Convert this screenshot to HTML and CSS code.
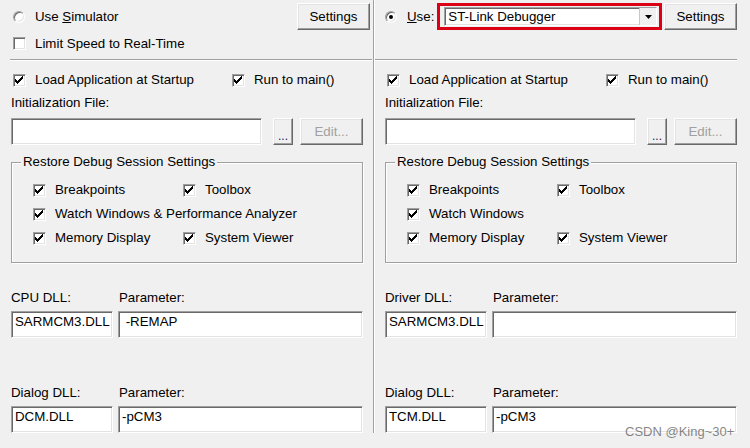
FILE: index.html
```html
<!DOCTYPE html>
<html lang="en">
<head>
    <meta charset="UTF-8">
    <title>Options for Target - Debug</title>
    <link rel="stylesheet" href="styles.css">
</head>
<body>
    <div class="dialog">
        <!-- Simulator side -->
        <div class="panel panel-left">
            <div class="top top-left">
                <div class="row">
                    <label class="opt"><span class="radio"></span><span>Use <u>S</u>imulator</span></label>
                    <button class="btn btn-settings">Settings</button>
                </div>
                <div class="row">
                    <label class="opt"><span class="box"></span><span>Limit Speed to Real-Time</span></label>
                </div>
            </div>
            <div class="sep sep-left"></div>
            <div class="opts">
                <label class="opt"><span class="box"><svg class="tick" viewBox="1 1 11 11"><path d="M2 5h1v3H2zM3 6h1v3H3zM4 7h1v3H4zM5 6h1v3H5zM6 5h1v3H6zM7 4h1v3H7zM8 3h1v3H8zM9 2h1v3H9z"/></svg></span><span>Load Application at Startup</span></label>
                <label class="opt"><span class="box"><svg class="tick" viewBox="1 1 11 11"><path d="M2 5h1v3H2zM3 6h1v3H3zM4 7h1v3H4zM5 6h1v3H5zM6 5h1v3H6zM7 4h1v3H7zM8 3h1v3H8zM9 2h1v3H9z"/></svg></span><span>Run to main()</span></label>
            </div>
            <div class="init-label">Initialization File:</div>
            <div class="file-row">
                <input class="field file-input" type="text">
                <button class="btn btn-dots">...</button>
                <button class="btn btn-edit" disabled>Edit...</button>
            </div>
            <fieldset class="group">
                <legend>Restore Debug Session Settings</legend>
                <div class="group-grid">
                    <label class="opt"><span class="box"><svg class="tick" viewBox="1 1 11 11"><path d="M2 5h1v3H2zM3 6h1v3H3zM4 7h1v3H4zM5 6h1v3H5zM6 5h1v3H6zM7 4h1v3H7zM8 3h1v3H8zM9 2h1v3H9z"/></svg></span><span>Breakpoints</span></label>
                    <label class="opt"><span class="box"><svg class="tick" viewBox="1 1 11 11"><path d="M2 5h1v3H2zM3 6h1v3H3zM4 7h1v3H4zM5 6h1v3H5zM6 5h1v3H6zM7 4h1v3H7zM8 3h1v3H8zM9 2h1v3H9z"/></svg></span><span>Toolbox</span></label>
                    <label class="opt wide"><span class="box"><svg class="tick" viewBox="1 1 11 11"><path d="M2 5h1v3H2zM3 6h1v3H3zM4 7h1v3H4zM5 6h1v3H5zM6 5h1v3H6zM7 4h1v3H7zM8 3h1v3H8zM9 2h1v3H9z"/></svg></span><span>Watch Windows &amp; Performance Analyzer</span></label>
                    <label class="opt"><span class="box"><svg class="tick" viewBox="1 1 11 11"><path d="M2 5h1v3H2zM3 6h1v3H3zM4 7h1v3H4zM5 6h1v3H5zM6 5h1v3H6zM7 4h1v3H7zM8 3h1v3H8zM9 2h1v3H9z"/></svg></span><span>Memory Display</span></label>
                    <label class="opt"><span class="box"><svg class="tick" viewBox="1 1 11 11"><path d="M2 5h1v3H2zM3 6h1v3H3zM4 7h1v3H4zM5 6h1v3H5zM6 5h1v3H6zM7 4h1v3H7zM8 3h1v3H8zM9 2h1v3H9z"/></svg></span><span>System Viewer</span></label>
                </div>
            </fieldset>
            <div class="dll dll-first">
                <span class="dll-label">CPU DLL:</span>
                <span class="dll-label param">Parameter:</span>
                <input class="field" type="text" value="SARMCM3.DLL">
                <input class="field" type="text" value=" -REMAP">
            </div>
            <div class="dll dll-second">
                <span class="dll-label">Dialog DLL:</span>
                <span class="dll-label param">Parameter:</span>
                <input class="field" type="text" value="DCM.DLL">
                <input class="field" type="text" value="-pCM3">
            </div>
        </div>

        <!-- Hardware debugger side -->
        <div class="panel panel-right">
            <div class="top">
                <div class="row row-use">
                    <label class="opt"><span class="radio on"></span><span><u>U</u>se:</span></label>
                    <div class="frame">
                        <div class="combo">
                            <span class="combo-text">ST-Link Debugger</span>
                            <span class="drop"><svg class="arrow" viewBox="0 0 7 4"><path d="M0 0h7L3.5 4z"/></svg></span>
                        </div>
                    </div>
                    <button class="btn btn-settings">Settings</button>
                </div>
            </div>
            <div class="sep sep-right"></div>
            <div class="opts">
                <label class="opt"><span class="box"><svg class="tick" viewBox="1 1 11 11"><path d="M2 5h1v3H2zM3 6h1v3H3zM4 7h1v3H4zM5 6h1v3H5zM6 5h1v3H6zM7 4h1v3H7zM8 3h1v3H8zM9 2h1v3H9z"/></svg></span><span>Load Application at Startup</span></label>
                <label class="opt"><span class="box"><svg class="tick" viewBox="1 1 11 11"><path d="M2 5h1v3H2zM3 6h1v3H3zM4 7h1v3H4zM5 6h1v3H5zM6 5h1v3H6zM7 4h1v3H7zM8 3h1v3H8zM9 2h1v3H9z"/></svg></span><span>Run to main()</span></label>
            </div>
            <div class="init-label">Initialization File:</div>
            <div class="file-row">
                <input class="field file-input" type="text">
                <button class="btn btn-dots">...</button>
                <button class="btn btn-edit" disabled>Edit...</button>
            </div>
            <fieldset class="group">
                <legend>Restore Debug Session Settings</legend>
                <div class="group-grid">
                    <label class="opt"><span class="box"><svg class="tick" viewBox="1 1 11 11"><path d="M2 5h1v3H2zM3 6h1v3H3zM4 7h1v3H4zM5 6h1v3H5zM6 5h1v3H6zM7 4h1v3H7zM8 3h1v3H8zM9 2h1v3H9z"/></svg></span><span>Breakpoints</span></label>
                    <label class="opt"><span class="box"><svg class="tick" viewBox="1 1 11 11"><path d="M2 5h1v3H2zM3 6h1v3H3zM4 7h1v3H4zM5 6h1v3H5zM6 5h1v3H6zM7 4h1v3H7zM8 3h1v3H8zM9 2h1v3H9z"/></svg></span><span>Toolbox</span></label>
                    <label class="opt wide"><span class="box"><svg class="tick" viewBox="1 1 11 11"><path d="M2 5h1v3H2zM3 6h1v3H3zM4 7h1v3H4zM5 6h1v3H5zM6 5h1v3H6zM7 4h1v3H7zM8 3h1v3H8zM9 2h1v3H9z"/></svg></span><span>Watch Windows</span></label>
                    <label class="opt"><span class="box"><svg class="tick" viewBox="1 1 11 11"><path d="M2 5h1v3H2zM3 6h1v3H3zM4 7h1v3H4zM5 6h1v3H5zM6 5h1v3H6zM7 4h1v3H7zM8 3h1v3H8zM9 2h1v3H9z"/></svg></span><span>Memory Display</span></label>
                    <label class="opt"><span class="box"><svg class="tick" viewBox="1 1 11 11"><path d="M2 5h1v3H2zM3 6h1v3H3zM4 7h1v3H4zM5 6h1v3H5zM6 5h1v3H6zM7 4h1v3H7zM8 3h1v3H8zM9 2h1v3H9z"/></svg></span><span>System Viewer</span></label>
                </div>
            </fieldset>
            <div class="dll dll-first">
                <span class="dll-label">Driver DLL:</span>
                <span class="dll-label param">Parameter:</span>
                <input class="field" type="text" value="SARMCM3.DLL">
                <input class="field" type="text" value="">
            </div>
            <div class="dll dll-second">
                <span class="dll-label">Dialog DLL:</span>
                <span class="dll-label param">Parameter:</span>
                <input class="field" type="text" value="TCM.DLL">
                <input class="field" type="text" value="-pCM3">
            </div>
        </div>

        <div class="watermark">CSDN @King~30+</div>
    </div>
</body>
</html>
```

FILE: styles.css
```css
* {
    box-sizing: border-box;
}

body {
    margin: 0;
    background: #f0f0f0;
    color: #000;
    font: 13.3px/16px "Liberation Sans", Arial, sans-serif;
}

.dialog {
    display: flex;
    position: relative;
    min-height: 448px;
    align-items: flex-start;
}

.panel {
    display: flex;
    flex-direction: column;
    height: 433px;
}

.panel-left {
    width: 374px;
    padding: 0 10px 0 11px;
    border-right: 1px solid #a0a0a0;
}

.panel-right {
    width: 376px;
    padding: 0 13px 0 10px;
    border-left: 1px solid #fff;
}

/* top area: radio, settings */
.top {
    height: 59px;
    padding-top: 3px;
}

.top-left {
    margin-right: -7px;
}

.row {
    display: flex;
    align-items: center;
    height: 27px;
    padding-left: 2px;
}

.row-use {
    padding-left: 0;
}

.opt {
    display: flex;
    align-items: center;
    white-space: nowrap;
}

.radio {
    position: relative;
    flex: none;
    width: 12px;
    height: 12px;
    margin-right: 10px;
    border-radius: 50%;
    background: #fff;
    border: 1px solid;
    border-color: #a0a0a0 #fff #fff #a0a0a0;
    box-shadow: inset 1px 1px 0 #696969, inset -1px -1px 0 #e3e3e3;
}

.radio.on::after {
    content: "";
    position: absolute;
    left: 3px;
    top: 3px;
    width: 4px;
    height: 4px;
    border-radius: 50%;
    background: #000;
}

.box {
    flex: none;
    width: 13px;
    height: 13px;
    margin-right: 9px;
    background: #fff;
    border: 1px solid;
    border-color: #a0a0a0 #fff #fff #a0a0a0;
    box-shadow: inset 1px 1px 0 #696969, inset -1px -1px 0 #e3e3e3;
}

.tick {
    display: block;
    width: 11px;
    height: 11px;
    shape-rendering: crispEdges;
}

.btn {
    font: inherit;
    color: #000;
    padding: 0;
    background: #f0f0f0;
    border: 1px solid;
    border-color: #fff #696969 #696969 #fff;
    box-shadow: inset -1px -1px 0 #a0a0a0, inset 1px 1px 0 #e3e3e3;
}

.btn-settings {
    width: 73px;
    height: 27px;
    margin-left: auto;
}

.btn-dots {
    width: 20px;
    margin-left: 11px;
    padding-top: 8px;
    font-size: 12px;
    color: #1a1a5a;
}

.btn-edit {
    width: 63px;
    margin-left: 7px;
    color: #a0a0a0;
}

/* red marker round the debugger choice */
.frame {
    width: 225px;
    height: 27px;
    margin-left: 3px;
    padding: 1px 2px 1px 4px;
    border: 3px solid #dc0016;
}

.combo {
    display: flex;
    align-items: center;
    height: 100%;
    padding-left: 3px;
    background: #fff;
    border: 1px solid;
    border-color: #a0a0a0 #fff #fff #a0a0a0;
    box-shadow: inset 1px 1px 0 #696969, inset -1px -1px 0 #e3e3e3;
}

.combo-text {
    flex: 1;
}

.drop {
    display: flex;
    align-items: center;
    justify-content: center;
    width: 17px;
    height: 100%;
    background: #f0f0f0;
    border-left: 1px solid #c8c8c8;
}

.arrow {
    width: 7px;
    height: 4px;
}

.sep {
    border-top: 1px solid #a0a0a0;
    border-bottom: 1px solid #fff;
}

.sep-left {
    margin: 0 -9px 0 -1px;
}

.sep-right {
    margin-left: -10px;
}

.opts {
    display: flex;
    align-items: center;
    height: 24px;
    margin-top: 7px;
    padding-left: 2px;
}

.opts .opt:first-child {
    width: 219px;
}

.init-label {
    height: 21px;
    line-height: 21px;
}

.file-row {
    display: flex;
    height: 27px;
    margin-top: 5px;
}

.field {
    height: 27px;
    padding: 1px 2px 8px 3px;
    font: inherit;
    line-height: 16px;
    color: #000;
    background: #fff;
    border: 1px solid;
    border-color: #a0a0a0 #fff #fff #a0a0a0;
    box-shadow: inset 1px 1px 0 #696969, inset -1px -1px 0 #e3e3e3;
    outline: none;
    min-width: 0;
}

.file-input {
    width: 251px;
}

/* group box */
.group {
    min-inline-size: 0;
    margin: 9px 0 0;
    padding: 8px 0 12px 9px;
    border: 1px solid #a0a0a0;
    box-shadow: inset 1px 1px 0 #fff, 1px 1px 0 #fff;
}

.group legend {
    padding: 0 2px;
    line-height: 16px;
    background: #f0f0f0;
}

.group-grid {
    display: grid;
    grid-template-columns: 150px auto;
    grid-auto-rows: 24px;
    align-items: center;
    padding-left: 12px;
}

.group-grid .wide {
    grid-column: span 2;
}

/* dll rows */
.dll {
    display: grid;
    grid-template-columns: 102px 1fr;
    grid-template-rows: 24px 27px;
    column-gap: 5px;
    row-gap: 1px;
}

.dll-label {
    line-height: 24px;
}

.dll-label.param {
    padding-left: 1px;
}

.dll-first {
    margin-top: 23px;
}

.dll-second {
    margin-top: 43px;
}

.watermark {
    position: absolute;
    left: 625px;
    top: 424px;
    z-index: 2;
    font-size: 13px;
    line-height: 16px;
    color: rgba(110, 110, 110, 0.85);
    white-space: nowrap;
}
```
